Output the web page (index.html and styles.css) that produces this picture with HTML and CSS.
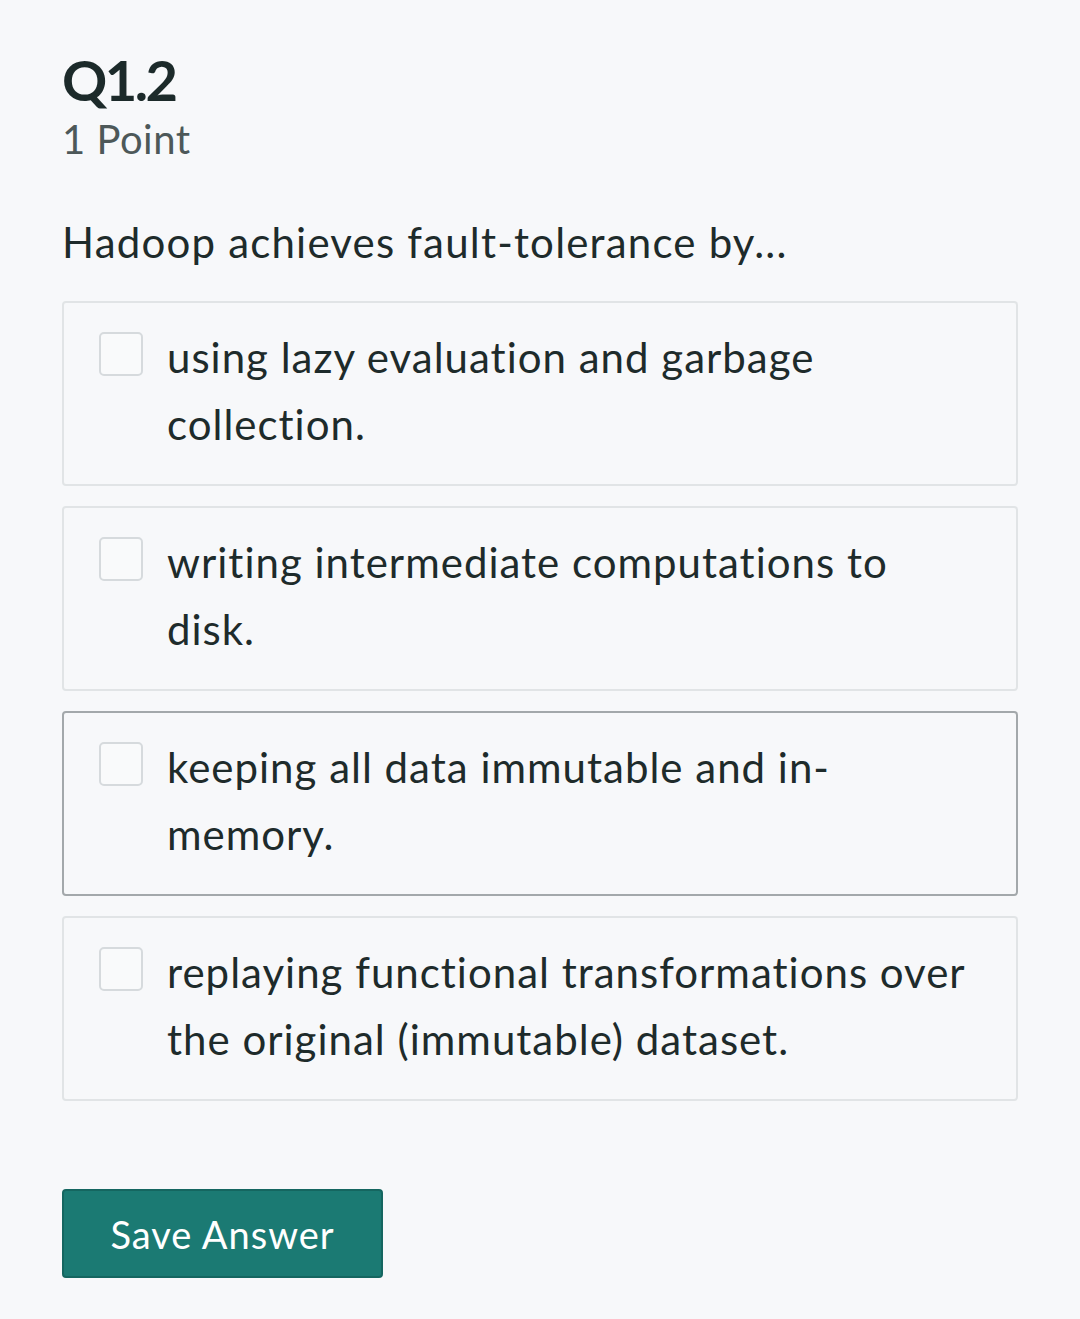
FILE: index.html
```html
<!DOCTYPE html>
<html lang="en">
<head>
    <meta charset="UTF-8">
    <meta name="viewport" content="width=device-width, initial-scale=1.0">
    <title>Q1.2</title>
    <link rel="stylesheet" href="styles.css">
</head>
<body>
    <div class="question">
        <div class="question-title">Q1.2</div>
        <div class="question-points">1 Point</div>

        <div class="question-prompt">Hadoop achieves fault-tolerance by...</div>

        <!-- Answer choices -->
        <div class="choices">
            <label class="choice">
                <span class="choice-box"></span>
                <span class="choice-text">using lazy evaluation and garbage collection.</span>
            </label>
            <label class="choice">
                <span class="choice-box"></span>
                <span class="choice-text">writing intermediate computations to disk.</span>
            </label>
            <label class="choice choice-hover">
                <span class="choice-box"></span>
                <span class="choice-text">keeping all data immutable and in-memory.</span>
            </label>
            <label class="choice">
                <span class="choice-box"></span>
                <span class="choice-text">replaying functional transformations over the original (immutable) dataset.</span>
            </label>
        </div>

        <button class="save-button">Save Answer</button>
    </div>
</body>
</html>
```

FILE: styles.css
```css
/* General Styling */
body {
    margin: 0;
    padding: 0;
    background: #f7f8fa;
    color: #1e2b2b;
    font-family: Lato, "Open Sans", sans-serif;
}

.question {
    padding: 48px 62px 40px 62px;
}

/* Header */
.question-title {
    font-size: 56px;
    font-weight: bold;
    line-height: 64px;
    letter-spacing: -2.5px;
    color: #1c2a2a;
}

.question-points {
    font-size: 40px;
    line-height: 54px;
    letter-spacing: 0.5px;
    color: #4d5859;
}

.question-prompt {
    margin-top: 48px;
    font-size: 42px;
    line-height: 56px;
    letter-spacing: 1.2px;
}

/* Choices */
.choices {
    display: flex;
    flex-direction: column;
    gap: 20px;
    margin-top: 31px;
}

.choice {
    display: flex;
    align-items: flex-start;
    gap: 24px;
    padding: 21px 38px 26px 35px;
    border: 2px solid #e1e4e6;
    border-radius: 4px;
}

.choice-hover {
    border-color: #a3a8ab;
}

.choice-box {
    flex: none;
    width: 40px;
    height: 40px;
    margin-top: 8px;
    border: 2px solid #d6dadd;
    border-radius: 5px;
    background: #f9fafb;
}

.choice-text {
    font-size: 42px;
    line-height: 67px;
    letter-spacing: 1px;
}

/* Button */
.save-button {
    margin-top: 88px;
    width: 321px;
    height: 89px;
    background: #1b7a73;
    border: 2px solid #156660;
    border-radius: 4px;
    color: #fff;
    font-family: Lato, "Open Sans", sans-serif;
    font-size: 38px;
    letter-spacing: 1px;
}
```
